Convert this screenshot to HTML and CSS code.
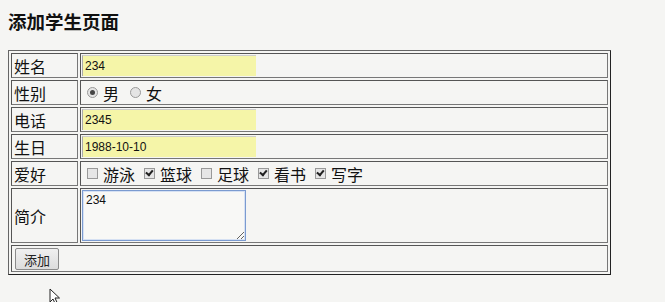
FILE: index.html
```html
<!DOCTYPE html>
<html lang="zh">
<head>
<meta charset="utf-8">
<title>添加学生页面</title>
<link rel="stylesheet" href="styles.css">
</head>
<body>
<div class="page">
  <h3 class="title">添加学生页面</h3>
  <form class="form">
    <table class="grid">
      <tr>
        <td class="label">姓名</td>
        <td class="field"><input class="text" type="text" value="234"></td>
      </tr>
      <tr>
        <td class="label">性别</td>
        <td class="field">
          <div class="opts radios">
            <label class="opt"><span class="radio on"></span>男</label>
            <label class="opt"><span class="radio"></span>女</label>
          </div>
        </td>
      </tr>
      <tr>
        <td class="label">电话</td>
        <td class="field"><input class="text" type="text" value="2345"></td>
      </tr>
      <tr>
        <td class="label">生日</td>
        <td class="field"><input class="text" type="text" value="1988-10-10"></td>
      </tr>
      <tr>
        <td class="label">爱好</td>
        <td class="field">
          <div class="opts checks">
            <label class="opt"><span class="check"></span>游泳</label>
            <label class="opt"><span class="check on"></span>篮球</label>
            <label class="opt"><span class="check"></span>足球</label>
            <label class="opt"><span class="check on"></span>看书</label>
            <label class="opt"><span class="check on"></span>写字</label>
          </div>
        </td>
      </tr>
      <tr>
        <td class="label">简介</td>
        <td class="field"><textarea class="area">234</textarea></td>
      </tr>
      <tr>
        <td class="field" colspan="2"><button class="btn" type="button">添加</button></td>
      </tr>
    </table>
  </form>
  <svg class="cursor" width="12" height="18" viewBox="0 0 12 18"><path d="M1 1 L1 14 L4 11 L6.5 16.5 L8.5 15.5 L6 10 L10.5 10 Z" fill="#fff" stroke="#222" stroke-width="1"/></svg>
</div>
</body>
</html>
```

FILE: styles.css
```css
html, body {
  margin: 0;
  padding: 0;
  background: #f5f5f3;
}
.page {
  position: relative;
  padding: 9px 8px 0;
  height: 293px;
  font-family: "Noto Sans CJK SC", "Noto Sans", sans-serif;
  color: #111;
}
.title {
  margin: 0;
  font-size: 18.5px;
  line-height: 24px;
  font-weight: bold;
}
.form {
  margin-top: 17px;
}
.grid {
  width: 603px;
  border-collapse: separate;
  border-spacing: 2px;
  border: 1px solid;
  border-color: #666 #222 #222 #666;
}
.grid td {
  border: 1px solid;
  border-color: #555 #777 #777 #555;
  padding: 1px;
  height: 21px;
  font-size: 16px;
  line-height: 20px;
}
.grid td.label {
  width: 62px;
  padding-left: 2px;
}
.text {
  display: block;
  width: 174px;
  height: 21px;
  box-sizing: border-box;
  margin: 0;
  padding: 1px 2px;
  border: 0;
  border-left: 1px solid #aaa;
  border-top: 1px solid #ccc;
  background: #f5f5a8;
  font-family: "Liberation Sans", Arial, sans-serif;
  font-size: 12px;
  color: #111;
}
.opts {
  display: flex;
  align-items: center;
  padding-left: 5px;
}
.opt {
  display: flex;
  align-items: center;
  font-size: 16px;
  line-height: 20px;
}
.radios .opt {
  margin-right: 11px;
}
.checks .opt {
  margin-right: 9px;
}
.radio {
  width: 11px;
  height: 11px;
  box-sizing: border-box;
  border-radius: 50%;
  border: 1px solid #999;
  background: #e4e4e4;
  margin-right: 5px;
  display: flex;
  align-items: center;
  justify-content: center;
}
.radio.on::after {
  content: "";
  width: 5px;
  height: 5px;
  border-radius: 50%;
  background: #444;
}
.check {
  width: 11px;
  height: 11px;
  box-sizing: border-box;
  border: 1px solid #999;
  background: #e6e6e6;
  margin-right: 5px;
  display: flex;
  align-items: center;
  justify-content: center;
}
.check.on::after {
  content: "";
  width: 3px;
  height: 5px;
  border-right: 2px solid #222;
  border-bottom: 2px solid #222;
  transform: rotate(40deg) translate(-1px, -1px);
}
.area {
  display: block;
  width: 164px;
  height: 51px;
  box-sizing: border-box;
  margin: 0;
  padding: 2px 3px;
  border: 1px solid #7b9bd0;
  box-shadow: inset 0 0 0 1px #d6e1f3;
  background: #f8f8f6;
  font-family: "Liberation Sans", Arial, sans-serif;
  font-size: 12px;
  color: #111;
  resize: both;
}
.btn {
  display: block;
  margin: 1px 0 0 2px;
  width: 44px;
  height: 22px;
  padding: 0;
  border: 1px solid #8a8a8a;
  border-radius: 2px;
  background: linear-gradient(#f0f0f0, #dcdcdc);
  font-family: "Noto Sans CJK SC", sans-serif;
  font-size: 13px;
  color: #222;
}
.cursor {
  position: absolute;
  left: 49px;
  top: 288px;
}
```
